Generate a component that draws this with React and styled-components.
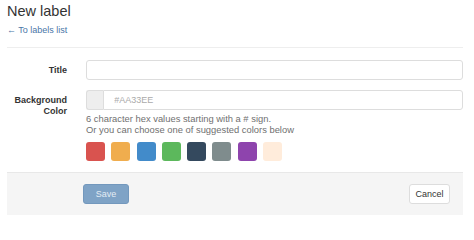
import React, { useState } from "react";
import styled, { createGlobalStyle } from "styled-components";

const SUGGESTED = [
    "#d9534f",
    "#f0ad4e",
    "#428bca",
    "#5cb85c",
    "#34495e",
    "#7f8c8d",
    "#8e44ad",
    "#ffecdb",
];

const GlobalStyle = createGlobalStyle`
    body {
        margin: 0;
        background: #fff;
        font-family: "Liberation Sans", Arial, sans-serif;
        color: #333;
    }
`;

const Page = styled.div`
    width: 456px;
    padding: 0 0 0 7px;
`;

const Heading = styled.h3`
    margin: 0;
    padding-top: 3px;
    font-size: 14.5px;
    font-weight: normal;
    line-height: 16px;
    color: #333;
`;

const BackLink = styled.a`
    display: block;
    margin-top: 5px;
    font-size: 9px;
    line-height: 12px;
    color: #4a76a8;
    text-decoration: none;
`;

const Rule = styled.hr`
    margin: 11px 0 0;
    border: 0;
    border-top: 1px solid #eee;
`;

const Form = styled.form`
    display: flex;
    flex-direction: column;
    gap: 10px;
    padding-top: 12px;
`;

const Row = styled.div`
    display: grid;
    grid-template-columns: 60px 1fr;
    column-gap: 19px;
    align-items: start;
`;

const Label = styled.label`
    padding-top: ${(p) => p.$top || 5}px;
    text-align: right;
    font-size: 9px;
    font-weight: bold;
    line-height: 10.5px;
    color: #333;
`;

const Input = styled.input`
    box-sizing: border-box;
    width: 100%;
    height: 20px;
    padding: 0 8px;
    border: 1px solid #ddd;
    border-radius: 3px;
    font-family: inherit;
    font-size: 9px;
    color: #555;
    outline: none;

    &::placeholder {
        color: #aaa;
    }
`;

const InputGroup = styled.div`
    display: flex;
    height: 20px;
`;

const Addon = styled.span`
    box-sizing: border-box;
    width: 18px;
    border: 1px solid #ddd;
    border-right: 0;
    border-radius: 3px 0 0 3px;
    background: ${(p) => p.$color};
`;

const GroupInput = styled(Input)`
    border-radius: 0 3px 3px 0;
    padding-left: 10px;
`;

const Help = styled.p`
    margin: 3px 0 0;
    font-size: 9.4px;
    line-height: 11px;
    color: #707070;
`;

const Swatches = styled.div`
    display: flex;
    gap: 6.3px;
    margin-top: 7px;
`;

const Swatch = styled.button`
    width: 19px;
    height: 19px;
    padding: 0;
    border: 0;
    border-radius: 3px;
    background: ${(p) => p.$color};
    cursor: pointer;
`;

const Actions = styled.div`
    display: flex;
    justify-content: space-between;
    align-items: center;
    margin-top: 11px;
    height: 42px;
    padding: 0 13px 0 76px;
    background: #f5f5f5;
    border-top: 1px solid #e8e8e8;
`;

const Button = styled.button`
    box-sizing: border-box;
    height: 20px;
    padding: 0;
    width: ${(p) => p.$width}px;
    border-radius: 3px;
    font-family: inherit;
    font-size: 9px;
    cursor: pointer;
`;

const SaveButton = styled(Button)`
    background: #7fa3c6;
    border: 1px solid #7398bd;
    color: #e4ecf4;

    &:disabled {
        cursor: not-allowed;
    }
`;

const CancelButton = styled(Button)`
    background: #fff;
    border: 1px solid #ddd;
    color: #333;
`;

const App = () => {
    const [title, setTitle] = useState("");
    const [color, setColor] = useState("");

    return (
        <Page>
            <GlobalStyle />
            <Heading>New label</Heading>
            <BackLink href="#">← To labels list</BackLink>
            <Rule />
            <Form onSubmit={(e) => e.preventDefault()}>
                <Row>
                    <Label $top={5}>Title</Label>
                    <Input value={title} onChange={(e) => setTitle(e.target.value)} />
                </Row>
                <Row>
                    <Label $top={5}>
                        Background
                        <br />
                        Color
                    </Label>
                    <div>
                        <InputGroup>
                            <Addon $color={color || "#eee"} />
                            <GroupInput
                                placeholder="#AA33EE"
                                value={color}
                                onChange={(e) => setColor(e.target.value)}
                            />
                        </InputGroup>
                        <Help>
                            6 character hex values starting with a # sign.
                            <br />
                            Or you can choose one of suggested colors below
                        </Help>
                        <Swatches>
                            {SUGGESTED.map((c) => (
                                <Swatch
                                    key={c}
                                    type="button"
                                    $color={c}
                                    onClick={() => setColor(c.toUpperCase())}
                                />
                            ))}
                        </Swatches>
                    </div>
                </Row>
            </Form>
            <Actions>
                <SaveButton $width={46} disabled={!title}>Save</SaveButton>
                <CancelButton $width={41} type="button">Cancel</CancelButton>
            </Actions>
        </Page>
    );
};

export default App;
